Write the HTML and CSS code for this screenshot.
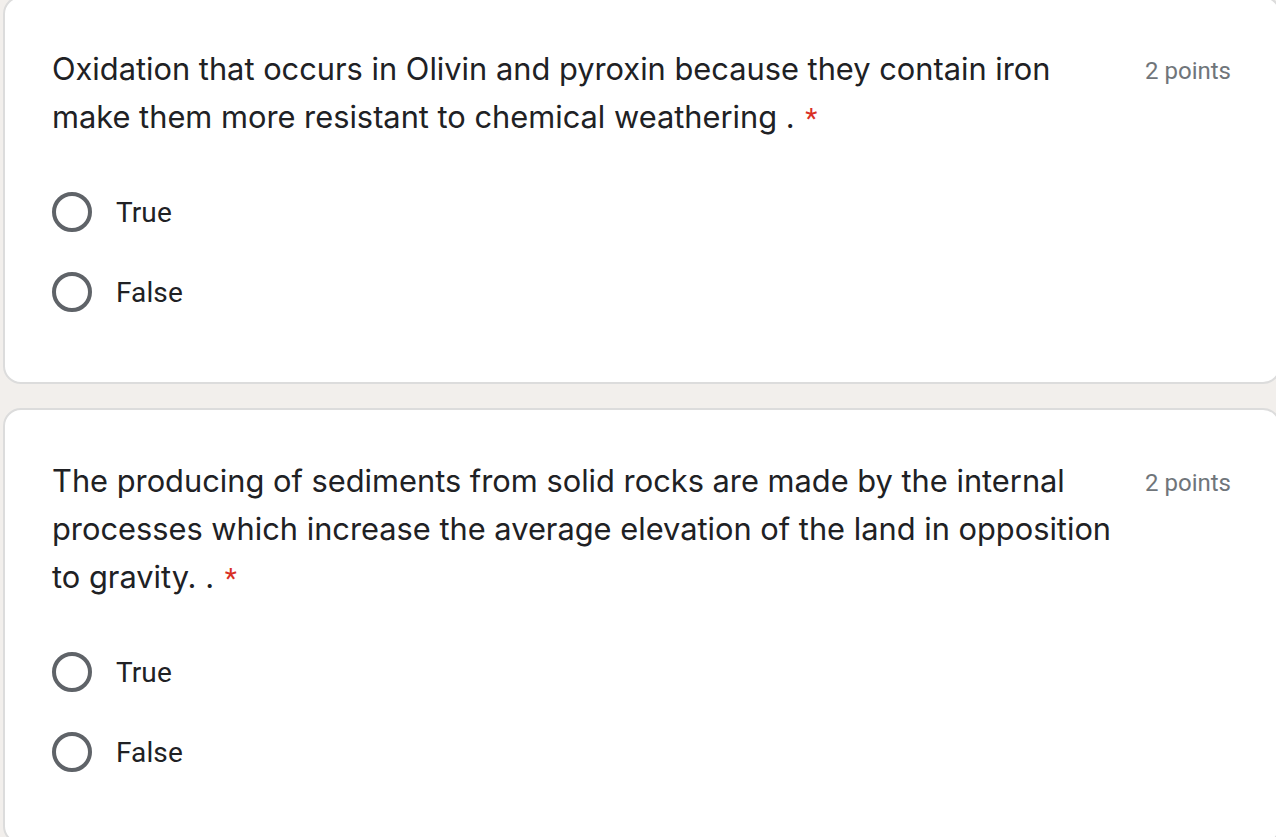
FILE: index.html
```html
<!DOCTYPE html>
<html lang="en">
<head>
<meta charset="utf-8">
<title>Quiz</title>
<link rel="stylesheet" href="styles.css">
</head>
<body>
<main class="form">
  <section class="card card-first">
    <div class="q-head">
      <div class="q-title">Oxidation that occurs in Olivin and pyroxin because they contain iron make them more resistant to chemical weathering .&nbsp;<span class="req">*</span></div>
      <div class="q-points">2 points</div>
    </div>
    <div class="options">
      <label class="opt"><span class="radio"></span><span class="opt-text">True</span></label>
      <label class="opt"><span class="radio"></span><span class="opt-text">False</span></label>
    </div>
  </section>
  <section class="card">
    <div class="q-head">
      <div class="q-title">The producing of sediments from solid rocks are made by the internal processes which increase the average elevation of the land in opposition to gravity. .&nbsp;<span class="req">*</span></div>
      <div class="q-points">2 points</div>
    </div>
    <div class="options">
      <label class="opt"><span class="radio"></span><span class="opt-text">True</span></label>
      <label class="opt"><span class="radio"></span><span class="opt-text">False</span></label>
    </div>
  </section>
</main>
</body>
</html>
```
FILE: styles.css
```css
html, body {
  margin: 0;
  padding: 0;
  background: #f2efec;
  overflow: hidden;
  height: 837px;
}
.form {
  display: flex;
  flex-direction: column;
  gap: 24px;
  padding-left: 3px;
  width: 1276px;
}
.card {
  background: #ffffff;
  border: 2px solid #dcdcdc;
  border-radius: 18px;
  padding: 47px 48px 50px 47px;
  box-sizing: border-box;
  width: 1278px;
}
.card-first {
  margin-top: -4px;
}
.q-head {
  display: flex;
  align-items: flex-start;
  gap: 34px;
}
.q-title {
  flex: 1;
  font-family: Inter, "Noto Sans", sans-serif;
  font-size: 30.8px;
  line-height: 48px;
  color: #202124;
}
.req {
  color: #d93025;
  font-family: Roboto, sans-serif;
  font-size: 28px;
  line-height: 1;
  margin-left: 2px;
}
.q-points {
  font-family: Roboto, sans-serif;
  font-size: 24px;
  line-height: 48px;
  color: #70757a;
  padding-top: 2px;
  white-space: nowrap;
}
.options {
  display: flex;
  flex-direction: column;
  margin-top: 31px;
}
.opt {
  display: flex;
  align-items: center;
  height: 80px;
  gap: 24px;
}
.radio {
  width: 40px;
  height: 40px;
  box-sizing: border-box;
  border: 4px solid #5f6368;
  border-radius: 50%;
  flex: none;
}
.opt-text {
  font-family: Roboto, sans-serif;
  font-size: 28px;
  color: #202124;
  letter-spacing: 0.1px;
}
```
